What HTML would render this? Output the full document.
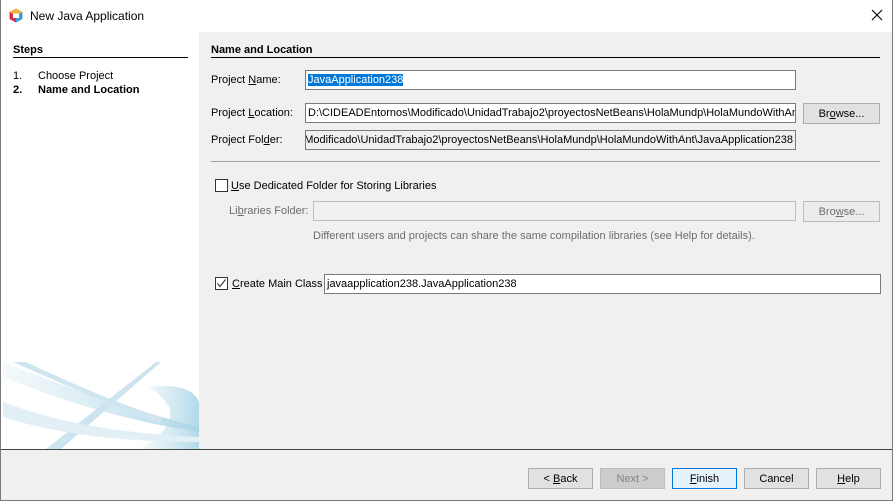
<!DOCTYPE html>
<html><head><style>
*{box-sizing:border-box;margin:0;padding:0}
body{width:893px;height:501px;overflow:hidden;background:#fff;font-family:"Liberation Sans",sans-serif;font-size:11px;color:#000;position:relative}
.a{position:absolute;white-space:nowrap}
.win{position:absolute;left:0;top:0;width:893px;height:501px;border:1px solid #7a7a7a;border-top:none}
.in{position:absolute;height:20px;border:1px solid #7a7a7a;background:#fff;overflow:hidden;display:flex;align-items:center;padding:0 2px;white-space:nowrap}
.btn{position:absolute;height:21px;border:1px solid #adadad;background:#e1e1e1;display:flex;align-items:center;justify-content:center}
u{text-decoration:underline}
.g{color:#6d6d6d}
.cb{position:absolute;width:13px;height:13px;border:1px solid #333;background:#fff}
</style></head><body>
<div class="win"></div>
<svg class="a" style="left:9px;top:8px" width="14" height="15" viewBox="0 0 14 15"><polygon points="7,0.5 13.5,4 13.5,11 7,14.5 0.5,11 0.5,4" fill="#3d9bd6"/><polygon points="7,0.5 13.5,4 7,7.5 0.5,4" fill="#f0b23a"/><polygon points="0.5,4 7,7.5 7,14.5 0.5,11" fill="#d8304b"/><polygon points="4,5.5 10,5.5 10,10 4,10" fill="#fff"/></svg>
<div class="a" style="left:30px;top:9px;font-size:12px">New Java Application</div>
<svg class="a" style="left:871px;top:9px" width="12" height="12"><path d="M1 1L11 11M11 1L1 11" stroke="#000" stroke-width="1.1"/></svg>
<div class="a" style="left:1px;top:32px;width:198px;height:417px;background:#fff;overflow:hidden">
<svg width="198" height="417" style="position:absolute;left:0;top:0"><defs><linearGradient id="gr" x1="0" x2="1"><stop offset="0" stop-color="#c6e2ee" stop-opacity="0.2"/><stop offset="1" stop-color="#a9d4e6" stop-opacity="0.9"/></linearGradient></defs>
<path d="M2 330 Q100 370 198 395 L198 400 Q100 385 2 345Z" fill="url(#gr)"/>
<path d="M12 330 L25 330 Q110 370 160 385 L160 392 Q90 365 12 330Z" fill="#cfe5ef"/>
<path d="M45 417 L155 330 L160 330 L60 417Z" fill="#cde4ee"/>
<path d="M148 355 Q190 350 198 370 L198 417 L140 417 Q175 395 168 375 Q160 362 148 355Z" fill="url(#gr)"/>
<path d="M2 370 Q80 400 198 405 L198 410 Q80 410 2 385Z" fill="#e2eff5"/></svg>
</div>
<div class="a" style="left:199px;top:32px;width:693px;height:417px;background:#f0f0f0"></div>
<div class="a" style="left:1px;top:449px;width:891px;height:51px;background:#f0f0f0;border-top:1px solid #444"></div>
<div class="a" style="left:13px;top:44px;font-weight:bold">Steps</div>
<div class="a" style="left:13px;top:57px;width:175px;height:1px;background:#000"></div>
<div class="a" style="left:13px;top:70px">1.</div><div class="a" style="left:38px;top:70px">Choose Project</div>
<div class="a" style="left:13px;top:84px;font-weight:bold">2.</div><div class="a" style="left:38px;top:84px;font-weight:bold">Name and Location</div>
<div class="a" style="left:211px;top:44px;font-weight:bold">Name and Location</div>
<div class="a" style="left:211px;top:57px;width:669px;height:1px;background:#000"></div>
<div class="a" style="left:211px;top:74px">Project <u>N</u>ame:</div>
<div class="in" style="left:305px;top:70px;width:491px"><span style="background:#0078d7;color:#fff">JavaApplication238</span></div>
<div class="a" style="left:211px;top:107px">Project <u>L</u>ocation:</div>
<div class="in" style="left:305px;top:103px;width:491px">D:\CIDEADEntornos\Modificado\UnidadTrabajo2\proyectosNetBeans\HolaMundp\HolaMundoWithAnt</div>
<div class="btn" style="left:803px;top:103px;width:77px">Br<u>o</u>wse...</div>
<div class="a" style="left:211px;top:134px">Project Fol<u>d</u>er:</div>
<div class="in" style="left:305px;top:130px;width:491px;background:#f0f0f0;justify-content:flex-end">D:\CIDEADEntornos\Modificado\UnidadTrabajo2\proyectosNetBeans\HolaMundp\HolaMundoWithAnt\JavaApplication238</div>
<div class="a" style="left:211px;top:161px;width:669px;height:1px;background:#a0a0a0"></div>
<div class="cb" style="left:215px;top:179px"></div>
<div class="a" style="left:231px;top:180px"><u>U</u>se Dedicated Folder for Storing Libraries</div>
<div class="a g" style="left:229px;top:205px">Li<u>b</u>raries Folder:</div>
<div class="in" style="left:313px;top:201px;width:483px;background:#f0f0f0;border-color:#bcbcbc"></div>
<div class="btn g" style="left:803px;top:201px;width:77px;background:#ececec;border-color:#bcbcbc">Bro<u>w</u>se...</div>
<div class="a g" style="left:313px;top:230px">Different users and projects can share the same compilation libraries (see Help for details).</div>
<div class="cb" style="left:215px;top:277px"><svg width="11" height="11" style="position:absolute;left:0;top:0"><path d="M1.5 5.5L4 8.5L9.5 1.5" stroke="#333" fill="none" stroke-width="1.1"/></svg></div>
<div class="a" style="left:232px;top:278px"><u>C</u>reate Main Class</div>
<div class="in" style="left:324px;top:274px;width:557px">javaapplication238.JavaApplication238</div>
<div class="btn" style="left:528px;top:468px;width:65px">&lt;&nbsp;<u>B</u>ack</div>
<div class="btn g" style="left:600px;top:468px;width:65px;background:#cccccc;border-color:#bfbfbf;color:#838383">Next &gt;</div>
<div class="btn" style="left:672px;top:468px;width:65px;background:#e5f1fb;border-color:#0078d7"><u>F</u>inish</div>
<div class="btn" style="left:744px;top:468px;width:65px">Cancel</div>
<div class="btn" style="left:816px;top:468px;width:65px"><u>H</u>elp</div>
</body></html>
